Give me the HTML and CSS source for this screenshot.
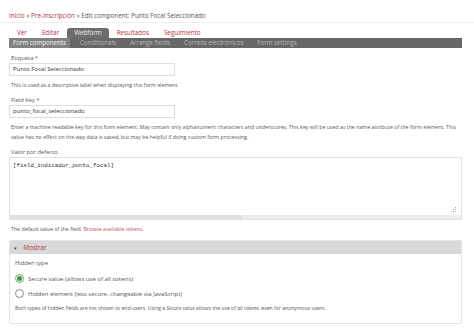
FILE: index.html
```html
<!DOCTYPE html>
<html lang="es">
<head>
    <meta charset="UTF-8">
    <title>Edit component: Punto Focal Seleccionado</title>
    <link rel="stylesheet" href="styles.css">
</head>
<body>
<div class="root">

    <div class="breadcrumb">
        <a href="#">Inicio</a> » <a href="#">Pre-Inscripción</a> » Edit component: Punto Focal Seleccionado
    </div>

    <div class="tabs">
        <a href="#">Ver</a>
        <a href="#">Editar</a>
        <a href="#" class="active">Webform</a>
        <a href="#">Resultados</a>
        <a href="#">Seguimiento</a>
    </div>
    <div class="subtabs">
        <a href="#" class="active">Form components</a>
        <a href="#">Conditionals</a>
        <a href="#">Arrange fields</a>
        <a href="#">Correos electrónicos</a>
        <a href="#">Form settings</a>
    </div>

    <div class="form-item">
        <label>Etiqueta <span class="req">*</span></label>
        <div class="text-input">Punto Focal Seleccionado</div>
        <div class="desc">This is used as a descriptive label when displaying this form element.</div>
    </div>

    <div class="form-item">
        <label>Field Key <span class="req">*</span></label>
        <div class="text-input">punto_focal_seleccionado</div>
        <div class="desc">Enter a machine readable key for this form element. May contain only alphanumeric characters and underscores. This key will be used as the name attribute of the form element. This value has no effect on the way data is saved, but may be helpful if doing custom form processing.</div>
    </div>

    <div class="form-item">
        <label>Valor por defecto</label>
        <div class="textarea">
            <div class="textarea-text">[field_indicador_punto_focal]</div>
            <div class="grip">
                <svg width="6" height="6" viewBox="0 0 6 6"><g fill="#aaa"><rect x="4" y="0" width="1" height="1"/><rect x="4" y="2" width="1" height="1"/><rect x="2" y="2" width="1" height="1"/><rect x="4" y="4" width="1" height="1"/><rect x="2" y="4" width="1" height="1"/><rect x="0" y="4" width="1" height="1"/></g></svg>
            </div>
        </div>
        <div class="hscroll"><div class="thumb"></div></div>
        <div class="desc">The default value of the field. <a href="#">Browse available tokens.</a></div>
    </div>

    <div class="fieldset">
        <div class="legend"><span class="arrow">▾</span> Mostrar</div>
        <div class="fieldset-body">
            <div class="sub-label">Hidden type</div>
            <div class="radio checked"><span class="dot"></span>Secure value (allows use of all tokens)</div>
            <div class="radio"><span class="dot"></span>Hidden element (less secure, changeable via JavaScript)</div>
            <div class="desc">Both types of hidden fields are not shown to end-users. Using a <em>Secure value</em> allows the use of <em>all tokens</em>, even for anonymous users.</div>
        </div>
    </div>

</div>
</body>
</html>
```

FILE: styles.css
```css
* {
    box-sizing: border-box;
}

body {
    font-family: "Open Sans", "Noto Sans", sans-serif;
    margin: 0;
    padding: 0;
    color: #444;
    background: #fff;
}

a {
    color: #b0343c;
    text-decoration: none;
}

.root {
    padding: 0 12px 0 9px;
}

.breadcrumb {
    font-size: 6.3px;
    color: #555;
    padding-top: 11px;
    height: 23px;
    border-bottom: 1px solid #f0f0f0;
    margin: 0 -12px 0 -9px;
    padding-left: 9px;
}

.tabs {
    display: flex;
    margin-top: 5px;
    padding-left: 1px;
    height: 10px;
}

.tabs a {
    font-size: 6.3px;
    line-height: 10px;
    padding: 0 7px;
    margin-right: 1px;
}

.tabs a.active {
    background: #6d6d6d;
    color: #eee;
    border-radius: 3px 3px 0 0;
}

.subtabs {
    display: flex;
    gap: 6px;
    background: #676767;
    height: 10px;
}

.subtabs a {
    font-size: 6.2px;
    line-height: 10px;
    color: #b8b8b8;
    padding: 0 4px;
}

.subtabs a.active {
    background: #828282;
    color: #f4f4f4;
}

.form-item {
    margin-top: 6px;
}

.form-item label {
    display: block;
    font-size: 5.8px;
    color: #555;
    height: 9px;
    padding-left: 2px;
}

.req {
    color: #c33;
}

.text-input {
    width: 166px;
    height: 13px;
    border: 1px solid #ddd;
    font-size: 6px;
    line-height: 11px;
    padding-left: 3px;
    color: #333;
}

.desc {
    font-size: 5.25px;
    color: #555;
    padding: 4px 2px 0;
    line-height: 10px;
}

.desc a {
    color: #c0505a;
}

.textarea {
    position: relative;
    height: 58px;
    border: 1px solid #e2e2e2;
    border-bottom: none;
}

.textarea-text {
    font-family: "Liberation Mono", monospace;
    font-size: 5.8px;
    padding: 4px 3px;
    color: #333;
}

.grip {
    position: absolute;
    right: 4px;
    bottom: 2px;
    line-height: 0;
}

.hscroll {
    height: 5px;
    background: #ececec;
    border: 1px solid #e2e2e2;
    border-top: none;
}

.thumb {
    width: 232px;
    height: 4px;
    background: #e0e0e0;
}

.fieldset {
    margin-top: 6px;
    border: 1px solid #e2e2e2;
    border-radius: 2px;
}

.legend {
    background: #d8d8d8;
    height: 13px;
    font-size: 6.2px;
    line-height: 13px;
    color: #b0343c;
    padding-left: 4px;
}

.arrow {
    color: #444;
    font-size: 5px;
    margin-right: 5px;
}

.fieldset-body {
    padding: 4px 5px 10px;
}

.sub-label {
    font-size: 5.8px;
    color: #555;
    margin-top: 1px;
    height: 12px;
}

.radio {
    display: flex;
    align-items: center;
    font-size: 6px;
    color: #555;
    height: 15px;
}

.dot {
    width: 9px;
    height: 9px;
    border: 1px solid #888;
    border-radius: 50%;
    margin-right: 4px;
    display: flex;
    align-items: center;
    justify-content: center;
}

.radio.checked .dot {
    border-color: #6a6;
}

.radio.checked .dot::after {
    content: "";
    width: 5px;
    height: 5px;
    border-radius: 50%;
    background: #3c9a3c;
}

.fieldset-body .desc {
    font-size: 5.1px;
    padding: 2px 0 0;
}
```
